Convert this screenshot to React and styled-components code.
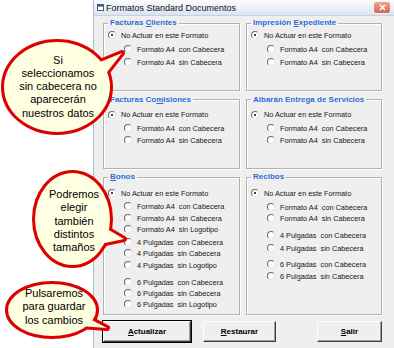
import React from "react";
import styled, { createGlobalStyle } from "styled-components";

const GlobalStyle = createGlobalStyle`
  html, body {
    margin: 0;
    padding: 0;
    background: #fff;
  }
  body {
    font-family: "Liberation Sans", Arial, sans-serif;
  }
`;

const Screen = styled.div`
  position: relative;
  width: 394px;
  height: 348px;
  overflow: hidden;
  background: #fff;
`;

const Window = styled.div`
  margin-left: 93px;
  height: 348px;
  background: #efefef;
  border-left: 1px solid #a9b8cc;
`;

const TitleBar = styled.div`
  height: 15px;
  display: flex;
  align-items: center;
  gap: 2px;
  padding: 0 3px 0 3px;
  background: linear-gradient(#fbfcfe, #dbe4f1);
  border-bottom: 1px solid #c6d0de;
`;

const Title = styled.span`
  font-size: 9px;
  color: #111;
  white-space: nowrap;
`;

const CloseButton = styled.span`
  margin-left: auto;
  width: 18px;
  height: 13px;
  box-sizing: border-box;
  border: 1px solid #f4f4f4;
  border-radius: 3px;
  background: linear-gradient(#f1a795, #d4644e);
  display: flex;
  align-items: center;
  justify-content: center;
`;

const Body = styled.div`
  padding: 2px 0 0 9px;
`;

const Groups = styled.div`
  display: grid;
  grid-template-columns: 137px 136px;
  grid-template-rows: 73px 74px 143px;
  column-gap: 6px;
  row-gap: 3.5px;
`;

const Group = styled.fieldset`
  margin: 0;
  padding: 0;
  min-width: 0;
  border: 1px solid #b2b2b2;
  box-shadow: inset 1px 1px 0 #fff, 1px 1px 0 #fff;
`;

const Legend = styled.legend`
  margin-left: 4px;
  padding: 0 2px;
  font: bold 8px/10px "Liberation Sans", Arial, sans-serif;
  color: #2b6bd6;
  white-space: nowrap;
`;

const Option = styled.div`
  display: flex;
  align-items: center;
  gap: 5px;
  height: 10px;
  margin-top: ${(p) => p.$gap}px;
  padding-left: ${(p) => (p.$sub ? 20 : 4)}px;
  font-size: 7.3px;
  color: #161616;
  white-space: pre;
`;

const Radio = styled.span`
  position: relative;
  flex: none;
  width: 8px;
  height: 8px;
  box-sizing: border-box;
  border-radius: 50%;
  border: 1px solid;
  border-color: #6c6c6c #e6e6e6 #e6e6e6 #6c6c6c;
  background: #fff;

  &::after {
    content: "";
    position: absolute;
    left: 2px;
    top: 2px;
    width: 2px;
    height: 2px;
    border-radius: 50%;
    background: ${(p) => (p.$on ? "#000" : "transparent")};
  }
`;

const ButtonRow = styled.div`
  display: flex;
  margin-top: 6px;
`;

const Button = styled.div`
  width: ${(p) => p.$w}px;
  height: 21px;
  margin-left: ${(p) => p.$ml}px;
  box-sizing: border-box;
  display: flex;
  align-items: center;
  justify-content: center;
  background: #efefef;
  border: 1px solid;
  border-color: #fff #3c3c3c #3c3c3c #fff;
  box-shadow: ${(p) =>
    p.$default
      ? "0 0 0 1px #000, inset -1px -1px 0 #a0a0a0"
      : "inset -1px -1px 0 #a0a0a0"};
  font: bold 8px "Liberation Sans", Arial, sans-serif;
  color: #000;
`;

const Overlay = styled.svg`
  position: absolute;
  left: 0;
  top: 0;
  pointer-events: none;
`;

const Note = styled.div`
  position: absolute;
  left: ${(p) => p.$cx - 60}px;
  top: ${(p) => p.$cy}px;
  width: 120px;
  transform: translateY(-50%);
  text-align: center;
  font: 11px/13.3px "Liberation Sans", Arial, sans-serif;
  color: #000;
`;

const simple = [
  "No Actuar en este Formato",
  "Formato A4  con Cabecera",
  "Formato A4  sin Cabecera",
];

const groups = [
  { title: ["Facturas ", "C", "lientes"], ys: [12, 26, 39], options: simple },
  { title: ["Impresión ", "E", "xpediente"], ys: [12, 26, 39], options: simple },
  { title: ["Facturas Co", "m", "isiones"], ys: [15, 28.5, 40.5], options: simple },
  { title: ["Albarán Entrega de Servicios", "", ""], ys: [15, 28.5, 40.5], options: simple },
  {
    title: ["", "B", "onos"],
    ys: [16, 29, 41, 52, 65, 76, 88, 105, 116, 127],
    options: [
      "No Actuar en este Formato",
      "Formato A4  con Cabecera",
      "Formato A4  sin Cabecera",
      "Formato A4  sin Logotipo",
      "4 Pulgadas  con Cabecera",
      "4 Pulgadas  sin Cabecera",
      "4 Pulgadas  sin Logotipo",
      "6 Pulgadas  con Cabecera",
      "6 Pulgadas  sin Cabecera",
      "6 Pulgadas  sin Logotipo",
    ],
  },
  {
    title: ["Recibos", "", ""],
    ys: [16, 30, 41, 58, 71, 87, 99],
    options: [
      "No Actuar en este Formato",
      "Formato A4  con Cabecera",
      "Formato A4  sin Cabecera",
      "4 Pulgadas  con Cabecera",
      "4 Pulgadas  sin Cabecera",
      "6 Pulgadas  con Cabecera",
      "6 Pulgadas  sin Cabecera",
    ],
  },
];

const callouts = [
  {
    ellipse: [57, 87, 53, 45],
    tail: "100,62 122,53 104,76",
    cx: 58,
    cy: 86.5,
    lines: ["Si", "seleccionamos", "sin cabecera no", "aparecerán", "nuestros datos"],
  },
  {
    ellipse: [72.5, 219, 37.5, 46],
    tail: "102,226 124,239 100,244",
    cx: 74,
    cy: 221,
    lines: ["Podremos", "elegir", "también", "distintos", "tamaños"],
  },
  {
    ellipse: [52, 310, 44, 26],
    tail: "84,316 107,328 80,326",
    cx: 54,
    cy: 307,
    lines: ["Pulsaremos", "para guardar", "los cambios"],
  },
];

const WindowIcon = () => (
  <svg width="7" height="7" viewBox="0 0 7 7">
    <rect x="0.5" y="0.5" width="6" height="6" fill="#fff" stroke="#4a5a70" />
    <rect x="1" y="1" width="5" height="1.6" fill="#2d5fb8" />
  </svg>
);

const CloseIcon = () => (
  <svg width="7" height="7" viewBox="0 0 7 7">
    <path d="M1 1 L6 6 M6 1 L1 6" stroke="#fff" strokeWidth="1.5" />
  </svg>
);

const Bubble = ({ ellipse, tail }) => {
  const [cx, cy, rx, ry] = ellipse;
  return (
    <g>
      <ellipse cx={cx} cy={cy} rx={rx} ry={ry} fill="#ffffe1" stroke="#dc0000" strokeWidth="6" />
      <polygon points={tail} fill="#ffffe1" stroke="#dc0000" strokeWidth="6" strokeLinejoin="round" />
      <ellipse cx={cx} cy={cy} rx={rx} ry={ry} fill="#ffffe1" />
      <polygon points={tail} fill="#ffffe1" />
    </g>
  );
};

const FormatGroup = ({ title, ys, options }) => (
  <Group>
    <Legend>
      {title[0]}
      {title[1] && <u>{title[1]}</u>}
      {title[2]}
    </Legend>
    {options.map((label, i) => (
      <Option key={label} $sub={i > 0} $gap={ys[i] - (i ? ys[i - 1] : 0) - 10}>
        <Radio $on={i === 0} />
        {label}
      </Option>
    ))}
  </Group>
);

const App = () => {
  return (
    <Screen>
      <GlobalStyle />
      <Window>
        <TitleBar>
          <WindowIcon />
          <Title>Formatos Standard Documentos</Title>
          <CloseButton>
            <CloseIcon />
          </CloseButton>
        </TitleBar>
        <Body>
          <Groups>
            {groups.map((g) => (
              <FormatGroup key={g.title.join("")} {...g} />
            ))}
          </Groups>
          <ButtonRow>
            <Button $w={88} $ml={0} $default>
              <u>A</u>ctualizar
            </Button>
            <Button $w={73} $ml={12}>
              <u>R</u>estaurar
            </Button>
            <Button $w={65} $ml={41}>
              <u>S</u>alir
            </Button>
          </ButtonRow>
        </Body>
      </Window>

      <Overlay width="394" height="348" viewBox="0 0 394 348">
        {callouts.map((c) => (
          <Bubble key={c.lines[0]} ellipse={c.ellipse} tail={c.tail} />
        ))}
      </Overlay>
      {callouts.map((c) => (
        <Note key={c.lines[0]} $cx={c.cx} $cy={c.cy}>
          {c.lines.map((l) => (
            <div key={l}>{l}</div>
          ))}
        </Note>
      ))}
    </Screen>
  );
};

export default App;
